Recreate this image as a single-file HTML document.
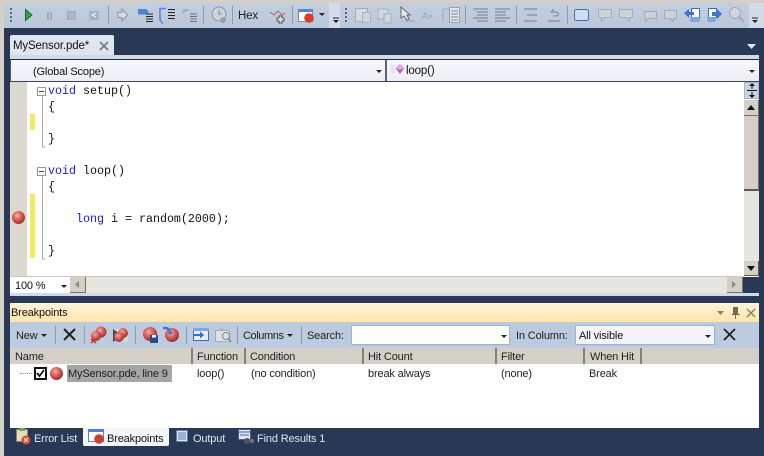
<!DOCTYPE html>
<html><head><meta charset="utf-8">
<style>
html,body{margin:0;padding:0}
#r{position:relative;width:764px;height:456px;overflow:hidden;background:#293955;font-family:"Liberation Sans",sans-serif;font-size:11px;letter-spacing:-0.15px;color:#1a1a1a}
#r div,#r span,#r svg{position:absolute}
.t{white-space:nowrap;line-height:13px}
.c{font-family:"Liberation Mono",monospace;font-size:11.67px;letter-spacing:0;white-space:pre;line-height:16px;color:#111}
.k{position:static!important;color:#1a1ad0}
.sep{width:1px;background:#8e9bab}
.h{top:348px;height:16px;background:#d4d0c8;border-right:2px solid #85817a;box-sizing:border-box}
.soft{filter:blur(0.35px)}
</style></head><body><div id="r">
<div style="left:0;top:0;width:4px;height:456px;background:#d4d0c8"></div>
<div style="left:0;top:0;width:764px;height:3px;background:#d4d0c8"></div>
<div style="left:4px;top:3px;width:760px;height:25px;background:linear-gradient(#c3cfdf,#b9c7da)"></div>
<div style="left:329px;top:3px;width:11px;height:25px;background:#d2dbe7"></div>
<div style="left:749px;top:3px;width:15px;height:25px;background:#d2dbe7"></div>

<svg class="soft" style="left:0;top:0" width="764" height="28" viewBox="0 0 764 28">
<g fill="#5d6b80"><rect x="10" y="8" width="2" height="2"/><rect x="10" y="12" width="2" height="2"/><rect x="10" y="16" width="2" height="2"/><rect x="10" y="20" width="2" height="2"/><rect x="345" y="8" width="2" height="2"/><rect x="345" y="12" width="2" height="2"/><rect x="345" y="16" width="2" height="2"/><rect x="345" y="20" width="2" height="2"/></g>
<path d="M25.500 9.500v11l6.500-5.500z" fill="#3d9c45" stroke="#1f6b2a"/>
<path d="M48 12v8M51 12v8" stroke="#a2acb8" stroke-width="2"/>
<rect x="67.500" y="11.500" width="8" height="8" fill="#b0b7c2" stroke="#a2abb6"/>
<rect x="89" y="11" width="10" height="9" fill="#a8b1bc"/><path d="M96 13l-4 2 4 2" fill="none" stroke="#eef1f5"/>
<path d="M118 12.500h4v-3.500l5.500 6-5.500 6v-3.500h-4z" fill="#d8dbe0" stroke="#8c939d"/>
<path d="M138 9h8l3 2.500-3 3h-8z" fill="#4f84d6"/><path d="M146 14h7M146 16.500h7M146 19h7M146 21.500h7" stroke="#222"/>
<path d="M166 8.500h-6v12l3 3" fill="none" stroke="#4f84d6" stroke-width="1.500"/><path d="M168 9.500h7M168 12.500h7M168 15.500h7M168 18.500h7" stroke="#222"/>
<path d="M182 10h7M182 13l5-3" stroke="#92a0b0" fill="none"/><path d="M190 14h7M190 16.500h7M190 19h7M190 21.500h7" stroke="#6c7480"/>
<circle cx="219" cy="14" r="7" fill="#ced3da" stroke="#8c939d"/><path d="M219 10v4h3" stroke="#7a828c" fill="none"/><circle cx="223" cy="20" r="3" fill="#98a0aa"/>
<path d="M270 12l4 3 4-4 4 4 3-2" fill="none" stroke="#b5626a"/><path d="M279 16h3v2h2v3h-2v2h-3v-2h-2v-3h2z" fill="#dde1e6" stroke="#555"/>
<rect x="298.500" y="9.500" width="14" height="12" fill="#fff" stroke="#7d8ca4"/><rect x="298" y="9" width="15" height="3" fill="#5b85c8"/><circle cx="309" cy="18" r="4.800" fill="#d93a2b"/>
<path d="M319 13h6l-3 3z" fill="#222"/>
<path d="M333 18h6" stroke="#222"/><path d="M333 20h6l-3 3z" fill="#222"/>
<rect x="355.500" y="8.500" width="12" height="13" fill="#d6dbe2" stroke="#a2abb6"/><rect x="362.500" y="12.500" width="8" height="10" fill="#ced4dc" stroke="#a8b0ba"/>
<rect x="378" y="9" width="10" height="10" fill="#d0d6de" stroke="#a8b0ba"/><rect x="384" y="14" width="7" height="9" fill="#d0d6de" stroke="#a8b0ba"/>
<path d="M401 7v11l3-2 3 4 2-1-2-4h3z" fill="#e6e9ed" stroke="#666"/><path d="M405 21h10" stroke="#9aa3ad"/>
<path d="M444 9h5M443 9v12" stroke="#a2abb6"/><path d="M449.500 7.500h10v15h-10z" fill="#e4e7eb" stroke="#98a2ae"/><path d="M451 11h7M451 14h7M451 17h7M451 20h7" stroke="#7f8894"/>
<path d="M473 9h15M477 12h11M477 15h11M473 18h15M477 21h11" stroke="#747c87"/>
<path d="M495 9h15M495 12h11M495 15h11M495 18h15M495 21h11" stroke="#747c87"/>
<path d="M524 9h13M527 15h10M524 21h13" stroke="#747c87"/>
<path d="M548 21h12" stroke="#747c87"/><path d="M551 12l3-3M551 12h5c3 0 3 4 0 4h-3" fill="none" stroke="#7c8591"/>
<rect x="574.500" y="9.500" width="14" height="11" rx="2" fill="#cfdcf2" stroke="#3f6fb5"/>
<path d="M598.500 9.500h13v8h-7l-3 4v-4h-3z" fill="#cdd2d9" stroke="#a2abb6"/>
<path d="M619.500 9.500h13v8h-3v4l-3-4h-7z" fill="#cdd2d9" stroke="#a2abb6"/>
<path d="M644.500 11.500h12v7h-8l-3 3z" fill="#cdd2d9" stroke="#a2abb6"/>
<path d="M664.500 10.500h12v8h-3v3l-3-3h-6z" fill="#cdd2d9" stroke="#a2abb6"/>
<rect x="691.500" y="8.500" width="8" height="9" fill="#fff" stroke="#3e6fb5"/><path d="M684 13l5-4v3h5v3h-5v3z" fill="#3e76cf"/><rect x="690" y="17" width="10" height="5" rx="2" fill="#7da6e6"/>
<rect x="708.500" y="8.500" width="8" height="9" fill="#fff" stroke="#3e6fb5"/><path d="M712 12h5v-3l5 5-5 5v-3h-5z" fill="#3e76cf"/><rect x="707" y="17" width="9" height="5" rx="2" fill="#7da6e6"/>
<circle cx="735" cy="13" r="5.500" fill="#d2d6dc" stroke="#a2abb6"/><path d="M739 17l5 5" stroke="#a2abb6" stroke-width="2"/>
<path d="M752 18h6" stroke="#222"/><path d="M752 20h6l-3 3z" fill="#222"/>
</svg>
<div class="sep" style="left:108px;top:6px;height:18px"></div>
<div class="sep" style="left:203px;top:6px;height:18px"></div>
<div class="sep" style="left:232px;top:6px;height:18px"></div>
<div class="sep" style="left:292px;top:6px;height:18px"></div>
<div class="sep" style="left:465px;top:6px;height:18px"></div>
<div class="sep" style="left:516px;top:6px;height:18px"></div>
<div class="sep" style="left:567px;top:6px;height:18px"></div>
<div class="t" style="left:238px;top:10px;color:#222;font-size:11.500px">Hex</div>
<div class="t" style="left:422px;top:10px;color:#98a2ae;font-size:9px">A»</div>

<div style="left:10px;top:35px;width:104px;height:21px;background:#dfe6f0;border-radius:2px 2px 0 0"></div>
<div class="t" style="left:13px;top:40px;font-size:11.500px;color:#111">MySensor.pde*</div>
<svg class="soft" style="left:99px;top:41px" width="11" height="11"><path d="M1 1l8 8M9 1l-8 8" stroke="#6f7885" stroke-width="1.700"/></svg>
<svg style="left:747px;top:44px" width="10" height="6"><path d="M0 0h9l-4.500 5z" fill="#dfe6f0"/></svg>
<div style="left:10px;top:55px;width:749px;height:4px;background:#cfdbe9"></div>
<div style="left:10px;top:59px;width:749px;height:1px;background:#1d2a40"></div>
<div style="left:11px;top:60px;width:748px;height:21px;background:linear-gradient(#f6f7fb,#eceef5)"></div>
<div style="left:385px;top:60px;width:2px;height:21px;background:#5c6474"></div>
<div style="left:10px;top:60px;width:1px;height:21px;background:#4b586e"></div>
<div class="t" style="left:33px;top:66px;color:#111">(Global Scope)</div>
<svg style="left:376px;top:70px" width="7" height="4"><path d="M0 0h6l-3 3z" fill="#222"/></svg>
<svg style="left:749px;top:70px" width="7" height="4"><path d="M0 0h6l-3 3z" fill="#222"/></svg>
<svg class="soft" style="left:390px;top:61px" width="16" height="16"><path d="M0 5h5M0 8h5M0 11h5" stroke="#d7c9dd"/><path d="M10 3l4.500 4-4.500 6-4.500-6z" fill="#c54fc4"/><path d="M10 3l4.500 4-4.500 2-4.500-2z" fill="#eaa3ea"/></svg>
<div class="t" style="left:406px;top:65px;color:#111;font-size:11.500px">loop()</div>

<div style="left:10px;top:81px;width:749px;height:1px;background:#3a4760"></div>
<div style="left:10px;top:82px;width:749px;height:195px;background:#fff"></div>
<div style="left:10px;top:82px;width:17px;height:195px;background:#dcd9d1"></div>
<div style="left:30px;top:114px;width:5px;height:16px;background:#f3ea60"></div>
<div style="left:30px;top:194px;width:5px;height:64px;background:#f3ea60"></div>

<svg style="left:36px;top:82px" width="14" height="180">
<rect x="1.500" y="5.500" width="8" height="8" fill="#fff" stroke="#9a9a9a"/><path d="M3 9.500h5" stroke="#444"/>
<path d="M6.500 14v51h3" fill="none" stroke="#a8a8a8"/>
<rect x="1.500" y="85.500" width="8" height="8" fill="#fff" stroke="#9a9a9a"/><path d="M3 89.500h5" stroke="#444"/>
<path d="M6.500 94v83h3" fill="none" stroke="#a8a8a8"/>
</svg>
<div class="c" style="left:48px;top:83px"><span class="k">void</span> setup()</div>
<div class="c" style="left:48px;top:99px">{</div>
<div class="c" style="left:48px;top:131px">}</div>
<div class="c" style="left:48px;top:163px"><span class="k">void</span> loop()</div>
<div class="c" style="left:48px;top:179px">{</div>
<div class="c" style="left:76px;top:211px"><span class="k">long</span> i = random(2000);</div>
<div class="c" style="left:48px;top:243px">}</div>
<svg style="left:11px;top:210px" width="15" height="15"><defs><radialGradient id="g" cx=".4" cy=".35" r=".7"><stop offset="0" stop-color="#f4b0a8"/><stop offset=".55" stop-color="#d4534a"/><stop offset="1" stop-color="#8f2a26"/></radialGradient></defs><circle cx="7.500" cy="7.500" r="6.500" fill="url(#g)"/></svg>

<div style="left:744px;top:82px;width:15px;height:17px;background:#c9d4e2;border:1px solid #a8b4c4;box-sizing:border-box"></div>
<svg style="left:746px;top:83px" width="12" height="15"><path d="M1 7.500h10" stroke="#111"/><path d="M6 0l3 3H3zM6 15l-3-3h6z" fill="#111"/><path d="M6 3v3M6 9v3" stroke="#111"/></svg>
<div style="left:744px;top:100px;width:15px;height:16px;background:#d4d0c8;border-bottom:1px solid #77736b;border-right:1px solid #77736b;box-sizing:border-box"></div>
<svg style="left:747px;top:105px" width="9" height="5"><path d="M0 5h8L4 0z" fill="#111"/></svg>
<div style="left:744px;top:116px;width:15px;height:75px;background:#d4d0c8;border-right:1px solid #77736b;border-bottom:2px solid #5c5850;box-sizing:border-box"></div>
<div style="left:744px;top:191px;width:15px;height:70px;background:#e6e5df"></div>
<div style="left:744px;top:261px;width:15px;height:15px;background:#d4d0c8;border-right:1px solid #5c5850;border-bottom:1px solid #5c5850;box-sizing:border-box"></div>
<svg style="left:747px;top:266px" width="9" height="5"><path d="M0 0h8L4 5z" fill="#111"/></svg>

<div style="left:10px;top:276px;width:733px;height:1px;background:#c8c6be"></div>
<div style="left:10px;top:277px;width:60px;height:17px;background:#fff"></div>
<div class="t" style="left:15px;top:280px;color:#111">100 %</div>
<svg style="left:61px;top:285px" width="7" height="4"><path d="M0 0h6l-3 3z" fill="#222"/></svg>
<div style="left:70px;top:277px;width:16px;height:16px;background:#d4d0c8;border-right:1px solid #77736b;border-bottom:1px solid #77736b;box-sizing:border-box"></div>
<svg style="left:75px;top:281px" width="5" height="8"><path d="M4 0v7L0 3.500z" fill="#8a8a84"/></svg>
<div style="left:86px;top:277px;width:641px;height:16px;background:#e6e5df"></div>
<div style="left:727px;top:277px;width:16px;height:16px;background:#d4d0c8;border-right:1px solid #77736b;border-bottom:1px solid #77736b;box-sizing:border-box"></div>
<svg style="left:732px;top:281px" width="5" height="8"><path d="M0 0v7l4-3.500z" fill="#8a8a84"/></svg>
<div style="left:10px;top:293px;width:749px;height:3px;background:#cfdbe9"></div>

<div style="left:10px;top:303px;width:749px;height:19px;background:linear-gradient(#fff3dc,#ffe6a8)"></div>
<div class="t" style="left:11px;top:307px;color:#111">Breakpoints</div>
<svg class="soft" style="left:716px;top:306px" width="42" height="14"><path d="M1 5h7l-3.500 4z" fill="#8d7f5c"/><path d="M17 1h5v7h2v1h-4v4h-1V9h-3V8h1z" fill="#756a50"/><path d="M31 3l8 8M39 3l-8 8" stroke="#8d7f5c" stroke-width="1.400"/></svg>
<div style="left:10px;top:322px;width:749px;height:26px;background:#bccbde"></div>
<div class="t" style="left:16px;top:330px;color:#222">New</div>
<svg style="left:41px;top:334px" width="7" height="4"><path d="M0 0h6l-3 3z" fill="#222"/></svg>
<div class="sep" style="left:55px;top:326px;height:18px"></div>
<svg style="left:62px;top:327px" width="15" height="15"><path d="M2 2l11 11M13 2L2 13" stroke="#222" stroke-width="2"/></svg>
<div class="sep" style="left:84px;top:326px;height:18px"></div>
<svg class="soft" style="left:90px;top:326px" width="220" height="20">
<defs><radialGradient id="b" cx=".4" cy=".35" r=".7"><stop offset="0" stop-color="#f0aaa2"/><stop offset=".6" stop-color="#c9504a"/><stop offset="1" stop-color="#8f2a26"/></radialGradient></defs>
<circle cx="11" cy="6" r="5.500" fill="url(#b)"/><circle cx="6" cy="10" r="5" fill="url(#b)"/><path d="M1 13l5 4M6 13l-5 4" stroke="#d6332a" stroke-width="1.500"/>
<path d="M23 3h15v13H23z" fill="#d3d8df"/><path d="M23 3l10 7-10 6z" fill="#4a4a4a"/><circle cx="33" cy="7" r="5" fill="url(#b)"/><circle cx="29" cy="11" r="5" fill="url(#b)"/>
<circle cx="60" cy="8" r="7" fill="url(#b)"/><rect x="60" y="9" width="8" height="8" fill="#234a92"/><rect x="62" y="9" width="4" height="2.500" fill="#fff"/>
<circle cx="82" cy="9" r="7" fill="url(#b)"/><path d="M73 1c4-1 8 1 8 5h2l-3 3-3-3h2c0-2-3-3-6-3z" fill="#3e76cf"/>
<path d="M103.500 2.500h15v12h-15z" fill="#e8eef7" stroke="#3e6fb5"/><path d="M103 2h16v3h-16z" fill="#7da6e6"/><path d="M104 8h6V5.500l4 3.500-4 3.500V10h-6z" fill="#2f6fc6"/>
<path d="M125.500 4.500h14v11h-14z" fill="#dde1e6" stroke="#a2abb6"/><path d="M130 2l4 3" stroke="#a2abb6"/><circle cx="136" cy="10" r="3.500" fill="none" stroke="#7e8792"/><path d="M138 12l3 4" stroke="#7e8792" stroke-width="1.500"/>
</svg>
<div class="sep" style="left:135px;top:326px;height:18px"></div>
<div class="sep" style="left:186px;top:326px;height:18px"></div>
<div class="sep" style="left:237px;top:326px;height:18px"></div>
<div class="sep" style="left:301px;top:326px;height:18px"></div>
<div class="t" style="left:243px;top:330px;color:#222;letter-spacing:-0.4px">Columns</div>
<svg style="left:287px;top:334px" width="7" height="4"><path d="M0 0h6l-3 3z" fill="#222"/></svg>
<div class="t" style="left:307px;top:330px;color:#222">Search:</div>
<div style="left:351px;top:325px;width:159px;height:20px;background:#fff;border:1px solid #a3b1c6;box-sizing:border-box"></div>
<svg style="left:501px;top:335px" width="7" height="4"><path d="M0 0h6l-3 3z" fill="#222"/></svg>
<div class="t" style="left:516px;top:330px;color:#222">In Column:</div>
<div style="left:575px;top:325px;width:140px;height:20px;background:#f3f5fa;border:1px solid #a3b1c6;box-sizing:border-box"></div>
<div class="t" style="left:579px;top:330px;color:#111">All visible</div>
<svg style="left:705px;top:335px" width="7" height="4"><path d="M0 0h6l-3 3z" fill="#222"/></svg>
<svg style="left:722px;top:328px" width="14" height="14"><path d="M2 1l11 11M13 1L2 12" stroke="#222" stroke-width="1.800"/></svg>

<div style="left:10px;top:348px;width:749px;height:16px;background:#d4d0c8"></div>
<div class="h" style="left:10px;width:183px"></div>
<div class="h" style="left:193px;width:53px"></div>
<div class="h" style="left:246px;width:118px"></div>
<div class="h" style="left:364px;width:133px"></div>
<div class="h" style="left:497px;width:88px"></div>
<div class="h" style="left:585px;width:57px"></div>
<div class="t" style="left:15px;top:351px;color:#222">Name</div>
<div class="t" style="left:197px;top:351px;color:#222">Function</div>
<div class="t" style="left:250px;top:351px;color:#222">Condition</div>
<div class="t" style="left:368px;top:351px;color:#222">Hit Count</div>
<div class="t" style="left:501px;top:351px;color:#222">Filter</div>
<div class="t" style="left:590px;top:351px;color:#222">When Hit</div>

<div style="left:10px;top:364px;width:749px;height:64px;background:#fff"></div>
<div style="left:20px;top:373px;width:12px;border-top:1px dotted #999"></div>
<div style="left:34px;top:367px;width:13px;height:13px;background:#fff;border:2px solid #111;box-sizing:border-box"></div>
<svg style="left:36px;top:369px" width="9" height="9"><path d="M1 4l2.500 3L8 1" fill="none" stroke="#111" stroke-width="1.800"/></svg>
<svg style="left:49px;top:366px" width="15" height="15"><circle cx="7.500" cy="7.500" r="6.500" fill="url(#g)"/></svg>
<div style="left:67px;top:365px;width:105px;height:17px;background:#a6a6a6"></div>
<div class="t" style="left:68px;top:368px;color:#222">MySensor.pde, line 9</div>
<div class="t" style="left:197px;top:368px;color:#222">loop()</div>
<div class="t" style="left:251px;top:368px;color:#222">(no condition)</div>
<div class="t" style="left:368px;top:368px;color:#222">break always</div>
<div class="t" style="left:501px;top:368px;color:#222">(none)</div>
<div class="t" style="left:589px;top:368px;color:#222">Break</div>

<div style="left:83px;top:428px;width:86px;height:18px;background:#f4f6fa;border-radius:0 0 2px 2px"></div>
<svg class="soft" style="left:14px;top:427px" width="320" height="20">
<rect x="2.500" y="2.500" width="11" height="12" fill="#e5dcb8" stroke="#8c8468"/><rect x="5" y="1" width="6" height="3" fill="#7d9c5a"/><circle cx="12" cy="13" r="4.500" fill="#dd4a2f"/><path d="M10 11l4 4M14 11l-4 4" stroke="#fff"/>
<rect x="74.500" y="2.500" width="15" height="12" fill="#fff" stroke="#6d7d98"/><rect x="74" y="2" width="16" height="3" fill="#4f80c8"/><circle cx="85" cy="12" r="4.800" fill="#cf3f30"/>
<rect x="162.500" y="3.500" width="11" height="11" fill="#dfe8f6" stroke="#5e7db4"/><path d="M164 6h8M164 8h8M164 10h8M164 12h8" stroke="#5e7db4"/>
<rect x="224.500" y="2.500" width="12" height="10" fill="#dfe8f6" stroke="#3f5f9a"/><path d="M225 5h11M226 8h9" stroke="#3f5f9a"/><circle cx="233" cy="14" r="3" fill="#555"/><circle cx="238" cy="14" r="2" fill="#777"/>
</svg>
<div class="t" style="left:34px;top:433px;color:#dfe6f0">Error List</div>
<div class="t" style="left:107px;top:433px;color:#111">Breakpoints</div>
<div class="t" style="left:193px;top:433px;color:#dfe6f0">Output</div>
<div class="t" style="left:257px;top:433px;color:#dfe6f0">Find Results 1</div>
</div></body></html>
